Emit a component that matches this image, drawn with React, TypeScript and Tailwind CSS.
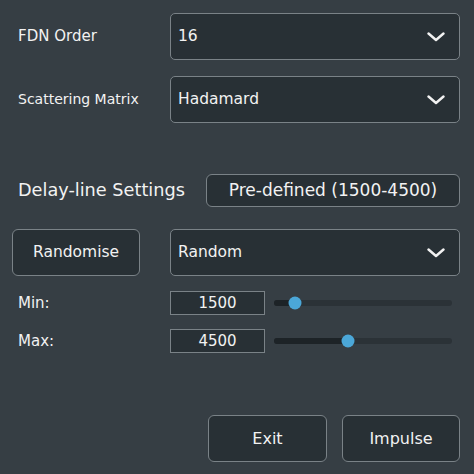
import { useState } from 'react';

const font = { fontFamily: '"DejaVu Sans", "Open Sans", sans-serif' };

function Chevron() {
  return (
    <svg width="18" height="10" viewBox="0 0 18 10" fill="none" className="shrink-0">
      <path d="M1.5 1.5 L9 8 L16.5 1.5" stroke="#f2f2f2" strokeWidth="2.4" strokeLinecap="round" strokeLinejoin="round" />
    </svg>
  );
}

function Dropdown({ value }: { value: string }) {
  return (
    <div className="flex h-full w-[290px] shrink-0 items-center justify-between rounded-[5px] border border-[#7a8287] bg-[#283035] pl-[7px] pr-[14px] text-[15.5px] text-[#f2f2f2]">
      <span>{value}</span>
      <Chevron />
    </div>
  );
}

function Slider({ pos }: { pos: number }) {
  return (
    <div className="relative h-[6px] w-[178px] rounded-full bg-[#2b3237]">
      <div className="absolute left-0 top-0 h-full rounded-full bg-[#1d2327]" style={{ width: pos }} />
      <div
        className="absolute top-1/2 h-[13px] w-[13px] -translate-x-1/2 -translate-y-1/2 rounded-full bg-[#4ba7d8]"
        style={{ left: pos }}
      />
    </div>
  );
}

export default function App() {
  const [min] = useState(1500);
  const [max] = useState(4500);

  return (
    <div className="flex h-[474px] w-[474px] flex-col bg-[#363e44] text-[#f2f2f2]" style={font}>
      <div className="flex h-[47px] items-center mt-[13px] pl-[18px]">
        <span className="w-[152px] shrink-0 text-[15px]">FDN Order</span>
        <Dropdown value="16" />
      </div>
      <div className="flex h-[47px] items-center mt-[16px] pl-[18px]">
        <span className="w-[152px] shrink-0 whitespace-nowrap text-[14px]">Scattering Matrix</span>
        <Dropdown value="Hadamard" />
      </div>

      <div className="flex h-[33px] items-center mt-[51px] pl-[18px]">
        <span className="w-[188px] shrink-0 whitespace-nowrap text-[17.7px]">Delay-line Settings</span>
        <div className="flex h-full w-[254px] items-center justify-center rounded-[6px] border border-[#7a8287] bg-[#283035] text-[17px]">
          Pre-defined (1500-4500)
        </div>
      </div>

      <div className="flex h-[47px] items-center mt-[22px] pl-[12px]">
        <div className="flex h-full w-[128px] shrink-0 items-center justify-center rounded-[6px] border border-[#7a8287] bg-[#283035] text-[15.5px]">
          Randomise
        </div>
        <div className="ml-[30px] h-full">
          <Dropdown value="Random" />
        </div>
      </div>

      <div className="flex h-[24px] items-center mt-[15px] pl-[18px]">
        <span className="w-[152px] shrink-0 text-[15px]">Min:</span>
        <div className="flex h-full w-[95px] shrink-0 items-center justify-center border border-[#7a8287] bg-[#283035] text-[15px]">
          {min}
        </div>
        <div className="ml-[9px]">
          <Slider pos={21} />
        </div>
      </div>
      <div className="flex h-[24px] items-center mt-[14px] pl-[18px]">
        <span className="w-[152px] shrink-0 text-[15px]">Max:</span>
        <div className="flex h-full w-[95px] shrink-0 items-center justify-center border border-[#7a8287] bg-[#283035] text-[15px]">
          {max}
        </div>
        <div className="ml-[9px]">
          <Slider pos={74} />
        </div>
      </div>

      <div className="flex h-[47px] justify-end gap-[15px] mt-[62px] pr-[14px]">
        <div className="flex h-full w-[119px] items-center justify-center rounded-[6px] border border-[#7a8287] bg-[#283035] text-[16px]">
          Exit
        </div>
        <div className="flex h-full w-[118px] items-center justify-center rounded-[6px] border border-[#7a8287] bg-[#283035] text-[16px]">
          Impulse
        </div>
      </div>
    </div>
  );
}
